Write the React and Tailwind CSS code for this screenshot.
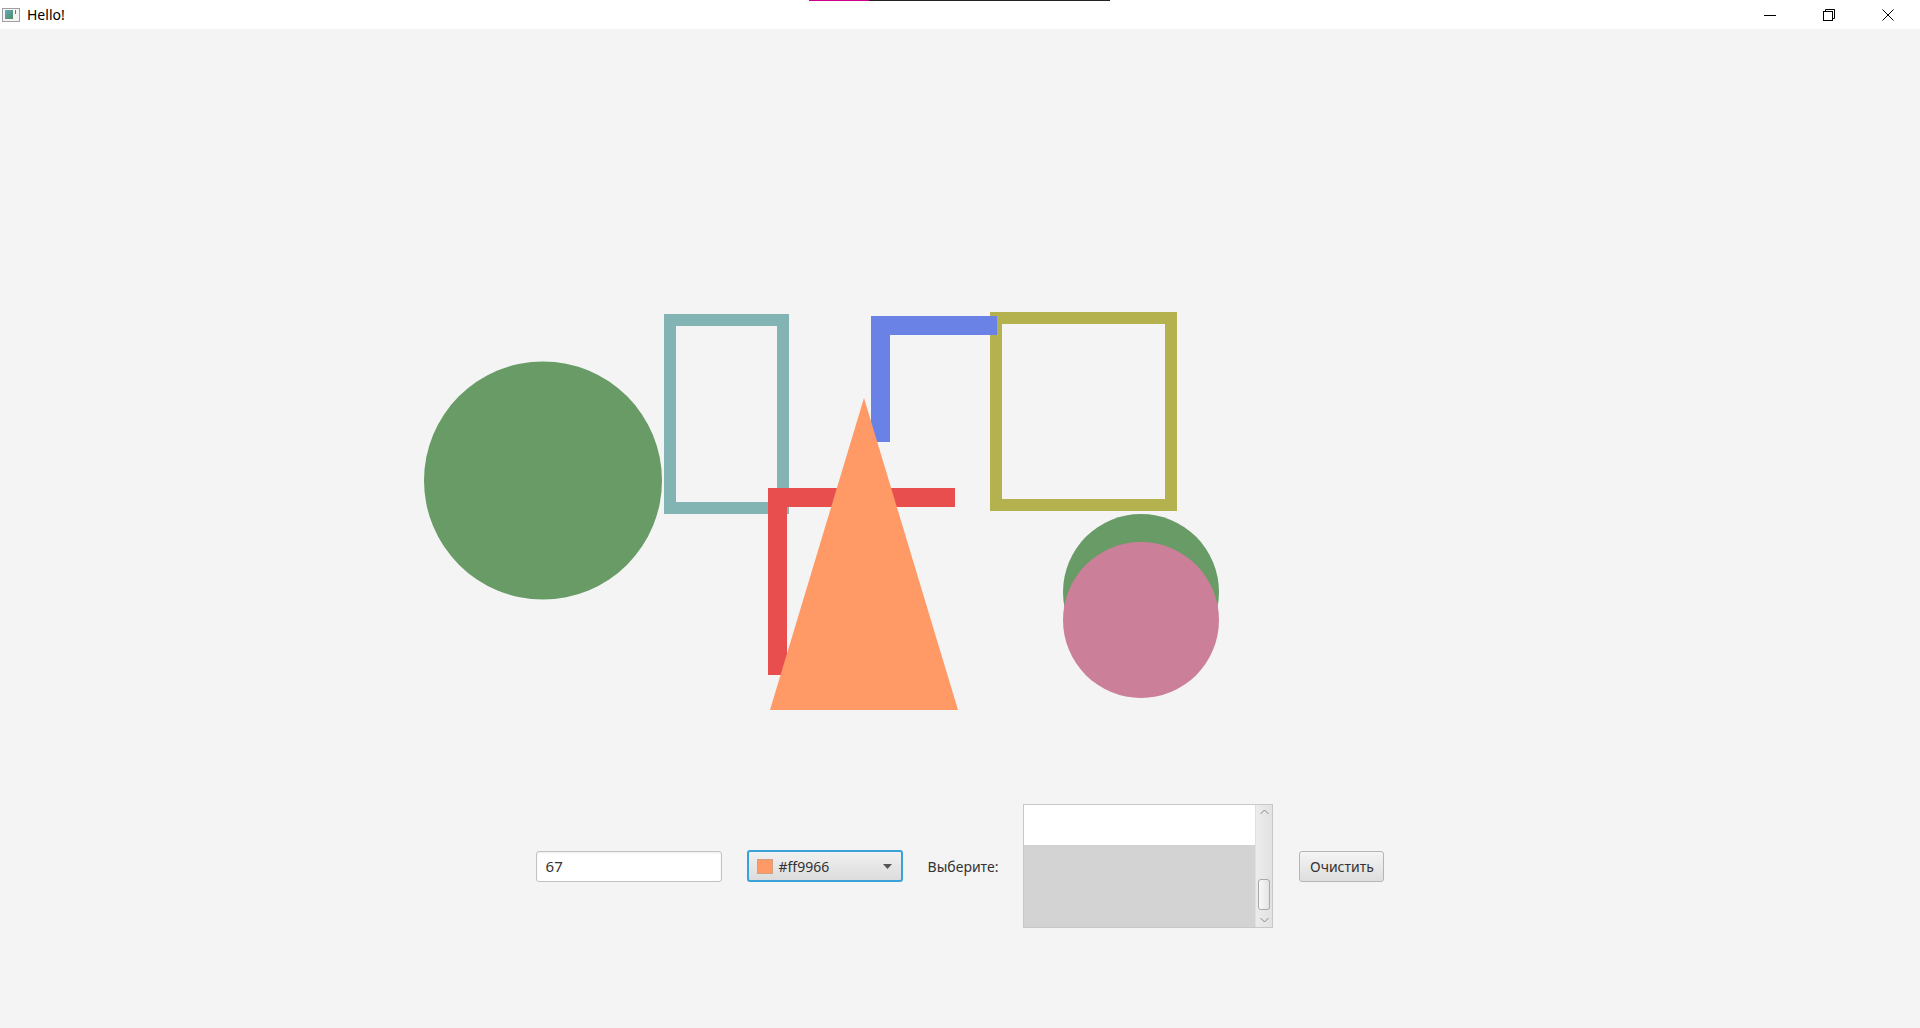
import React from "react";

const font = { fontFamily: '"Noto Sans", "Open Sans", sans-serif' };

// title bar of the window
const TitleBar = () => {
  return (
    <div className="relative flex h-[29px] items-center bg-white text-black">
      <div className="absolute left-[809px] top-0 h-px w-[60px] bg-[#cc0088]" />
      <div className="absolute left-[869px] top-0 h-px w-[241px] bg-[#222222]" />
      <div className="ml-[2px] flex h-[14px] w-[18px] items-center gap-[2px] border border-[#a0a0a0] bg-[#f4f4f4] px-[2px]">
        <div className="h-[9px] w-[8px] bg-gradient-to-br from-[#6aa8c4] to-[#4e8a5a]" />
        <div className="h-[4px] w-[1px] self-start mt-[1px] bg-[#4a7fb0]" />
      </div>
      <span className="ml-[7px] text-[14px] leading-none" style={font}>
        Hello!
      </span>
      <div className="ml-auto mr-[3px] flex h-full items-center">
        <div className="flex h-full w-[59px] items-center justify-center">
          <svg width="12" height="12" viewBox="0 0 12 12">
            <path d="M0 6.5H12" stroke="#000" strokeWidth="1" />
          </svg>
        </div>
        <div className="flex h-full w-[59px] items-center justify-center">
          <svg width="12" height="12" viewBox="0 0 12 12" fill="none">
            <rect x="0.5" y="2.5" width="9" height="9" stroke="#000" />
            <path d="M2.5 2.5V0.5H11.5V9.5H9.5" stroke="#000" />
          </svg>
        </div>
        <div className="flex h-full w-[59px] items-center justify-center">
          <svg width="12" height="12" viewBox="0 0 12 12">
            <path d="M0.5 0.5L11.5 11.5M11.5 0.5L0.5 11.5" stroke="#000" strokeWidth="1" />
          </svg>
        </div>
      </div>
    </div>
  );
};

// the drawing pane
const Canvas = () => {
  return (
    <svg width="1920" height="775" viewBox="0 29 1920 775" className="block">
      <circle cx="543" cy="480.5" r="119" fill="#689b66" />
      <rect x="670" y="320" width="113" height="188" fill="none" stroke="#82b4b4" strokeWidth="12" />
      <rect x="996" y="318" width="175" height="187" fill="none" stroke="#b4b24e" strokeWidth="12" />
      <path d="M871 316H997V335H890V442H871Z" fill="#6a82e6" />
      <path d="M768 488H955V507H787V675H768Z" fill="#e84e4e" />
      <polygon points="864,398 958,710 770,710" fill="#ff9966" />
      <circle cx="1141" cy="592" r="78" fill="#689b66" />
      <circle cx="1141" cy="620" r="78" fill="#cc7f99" />
    </svg>
  );
};

const Controls = () => {
  return (
    <div className="flex h-[124px] items-center justify-center gap-[25px]" style={font}>
      <div className="flex h-[31px] w-[186px] items-center rounded-[3px] border border-[#c2c2c2] bg-white px-[9px] text-[15px] text-[#333] shadow-[inset_0_1px_2px_rgba(0,0,0,0.08)]">
        67
      </div>
      <div className="flex h-[32px] w-[156px] items-center rounded-[3px] border-2 border-[#3aa2d8] bg-gradient-to-b from-[#f1f1f1] to-[#dcdcdc] pl-[8px] pr-[9px] text-[14px] text-[#333]">
        <div className="h-[15px] w-[16px] border border-[#d0a080] bg-[#ff9966]" />
        <span className="ml-[6px]">#ff9966</span>
        <svg className="ml-auto" width="9" height="5" viewBox="0 0 9 5">
          <path d="M0 0H9L4.5 5Z" fill="#555" />
        </svg>
      </div>
      <span className="text-[14px] text-[#333]">Выберите:</span>
      <div className="flex h-[124px] w-[250px] border border-[#c8c8c8]">
        <div className="flex flex-1 flex-col bg-[#d3d3d3]">
          <div className="h-[40px] bg-white" />
        </div>
        <div className="flex w-[17px] flex-col items-center bg-gradient-to-r from-[#ececec] to-[#e2e2e2] border-l border-[#e0e0e0]">
          <svg className="mt-[4px]" width="9" height="6" viewBox="0 0 9 6">
            <path d="M0.5 5L4.5 1L8.5 5" fill="none" stroke="#888" />
          </svg>
          <div className="flex-1" />
          <div className="h-[31px] w-[12px] rounded-[3px] border border-[#a8a8a8] bg-gradient-to-r from-[#f8f8f8] to-[#e4e4e4]" />
          <svg className="mb-[4px] mt-[7px]" width="9" height="6" viewBox="0 0 9 6">
            <path d="M0.5 1L4.5 5L8.5 1" fill="none" stroke="#888" />
          </svg>
        </div>
      </div>
      <button className="ml-px flex h-[31px] w-[85px] items-center justify-center rounded-[3px] border border-[#b5b5b5] bg-gradient-to-b from-[#f4f4f4] to-[#dedede] text-[14px] text-[#333]">
        Очистить
      </button>
    </div>
  );
};

export default function App() {
  return (
    <div className="flex h-[1028px] w-[1920px] flex-col overflow-hidden bg-[#f4f4f4]">
      <TitleBar />
      <Canvas />
      <Controls />
    </div>
  );
}
